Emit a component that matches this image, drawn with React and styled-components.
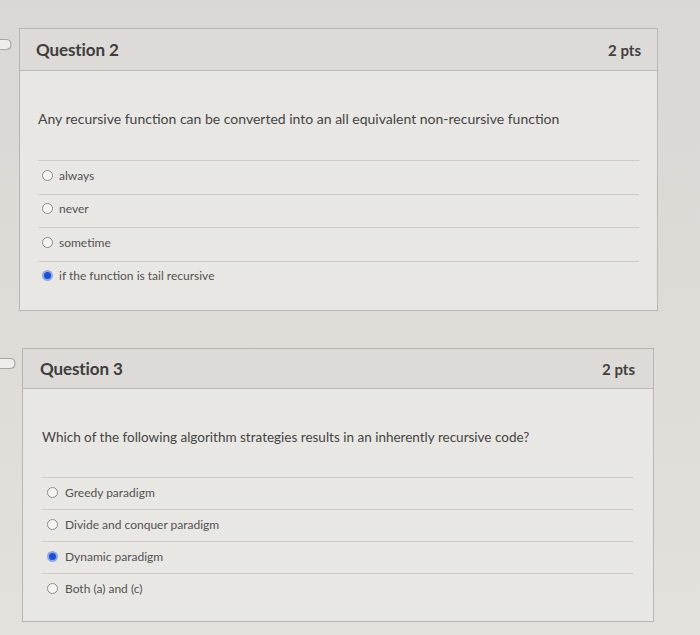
import React from "react";
import styled, { createGlobalStyle } from "styled-components";

const Global = createGlobalStyle`
  html, body { margin: 0; padding: 0; }
  body {
    width: 700px;
    height: 635px;
    overflow: hidden;
    background: linear-gradient(180deg, #dad7d4 0%, #dedbd7 45%, #e3e1dc 100%);
    font-family: Lato, "Open Sans", "Liberation Sans", sans-serif;
    color: #3f3f3f;
  }
`;

const Page = styled.div`
  display: flex;
  flex-direction: column;
  padding-top: 28px;
  gap: 37px;
`;

const QuestionRow = styled.div`
  display: flex;
  align-items: flex-start;
  padding-left: ${(p) => p.$left}px;
  position: relative;
`;

const Marker = styled.svg`
  position: absolute;
  left: 0;
  top: ${(p) => p.$top}px;
`;

const Card = styled.section`
  width: ${(p) => p.$width}px;
  border: 1px solid #b9b6b2;
  background: #e9e7e3;
  box-sizing: border-box;
`;

const Header = styled.header`
  display: flex;
  align-items: center;
  justify-content: space-between;
  height: ${(p) => p.$h}px;
  padding: 0 ${(p) => p.$padR}px 0 ${(p) => p.$padL}px;
  background: #dddad7;
  border-bottom: 1px solid #bdbab6;
  box-sizing: border-box;
`;

const Title = styled.h2`
  margin: 0;
  font-size: 17px;
  font-weight: 700;
  color: #3d3d3d;
  letter-spacing: -0.1px;
`;

const Points = styled.span`
  font-size: 15px;
  font-weight: 700;
  color: #404040;
`;

const Body = styled.div`
  padding: ${(p) => p.$top}px ${(p) => p.$padR}px 16px ${(p) => p.$padL}px;
`;

const Prompt = styled.p`
  margin: 0 0 ${(p) => p.$gap}px;
  font-size: ${(p) => p.$size}px;
  line-height: 20px;
  color: #444;
`;

const Options = styled.div`
  display: flex;
  flex-direction: column;
`;

const Option = styled.label`
  display: flex;
  align-items: center;
  gap: ${(p) => p.$gap}px;
  height: ${(p) => p.$h}px;
  padding-left: ${(p) => p.$indent}px;
  padding-bottom: ${(p) => p.$lift}px;
  border-top: 1px solid #cfccc8;
  font-size: ${(p) => p.$size}px;
  color: #525252;
  box-sizing: border-box;
`;

const Radio = styled.span`
  width: 11px;
  height: 11px;
  border-radius: 50%;
  box-sizing: border-box;
  flex: none;
  border: ${(p) => (p.$checked ? "2px solid #8fa9e6" : "1px solid #8d8b88")};
  background: ${(p) => (p.$checked ? "#1c4fd6" : "#f4f3f0")};
`;

const questions = [
  {
    num: 2,
    left: 19,
    width: 639,
    headH: 42,
    padL: 16,
    padR: 16,
    bodyTop: 38,
    promptSize: 14,
    promptGap: 31,
    padRBody: 18,
    padLBody: 18,
    optH: 33.5,
    optSize: 12,
    lift: 4,
    indent: 4,
    gap: 6,
    markerTop: 10,
    markerW: 11,
    text: "Any recursive function can be converted into an all equivalent non-recursive function",
    options: ["always", "never", "sometime", "if the function is tail recursive"],
    checked: 3,
  },
  {
    num: 3,
    left: 22,
    width: 632,
    headH: 40,
    padL: 17,
    padR: 18,
    bodyTop: 38,
    promptSize: 13.5,
    promptGap: 30,
    padRBody: 20,
    padLBody: 19,
    optH: 32,
    optSize: 12,
    lift: 2,
    indent: 5,
    gap: 7,
    markerTop: 9,
    markerW: 15,
    text: "Which of the following algorithm strategies results in an inherently recursive code?",
    options: ["Greedy paradigm", "Divide and conquer paradigm", "Dynamic paradigm", "Both (a) and (c)"],
    checked: 2,
  },
];

export default function App() {
  return (
    <>
      <Global />
      <Page>
        {questions.map((q) => (
          <QuestionRow key={q.num} $left={q.left}>
            <Marker
              $top={q.markerTop}
              width={q.markerW + 2}
              height="13"
              viewBox={`0 0 ${q.markerW + 2} 13`}
            >
              <path
                d={`M-4 1.5 H${q.markerW - 5} Q${q.markerW} 1.5 ${q.markerW} 6.5 Q${q.markerW} 11.5 ${q.markerW - 5} 11.5 H-4`}
                fill="#efedea"
                stroke="#a9a6a2"
                strokeWidth="1.2"
              />
            </Marker>
            <Card $width={q.width}>
              <Header $h={q.headH} $padL={q.padL} $padR={q.padR}>
                <Title>Question {q.num}</Title>
                <Points>2 pts</Points>
              </Header>
              <Body $top={q.bodyTop} $padL={q.padLBody} $padR={q.padRBody}>
                <Prompt $size={q.promptSize} $gap={q.promptGap}>
                  {q.text}
                </Prompt>
                <Options>
                  {q.options.map((o, i) => (
                    <Option
                      key={o}
                      $h={q.optH}
                      $size={q.optSize}
                      $indent={q.indent}
                      $gap={q.gap}
                      $lift={q.lift}
                    >
                      <Radio $checked={i === q.checked} />
                      {o}
                    </Option>
                  ))}
                </Options>
              </Body>
            </Card>
          </QuestionRow>
        ))}
      </Page>
    </>
  );
}
